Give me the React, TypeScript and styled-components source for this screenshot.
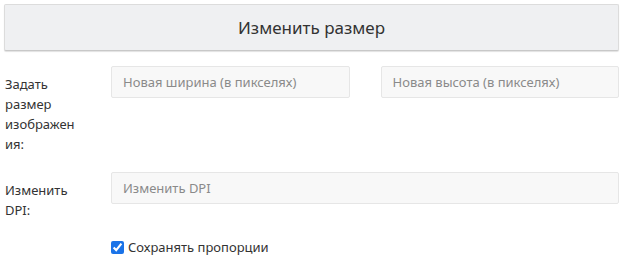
import React, { useState } from 'react';
import styled, { createGlobalStyle } from 'styled-components';

const GlobalStyle = createGlobalStyle`
  body {
    margin: 0;
    font-family: "Noto Sans", "Open Sans", sans-serif;
    color: #333;
    background: #fff;
  }
`;

const Page = styled.div`
  width: 623px;
  padding: 4px 4px 0 4px;
  box-sizing: border-box;
`;

const ResizeButton = styled.button`
  display: block;
  width: 100%;
  height: 47px;
  background: #eff0f2;
  border: 1px solid #dcdcdc;
  border-bottom-color: #c8c8c8;
  border-radius: 2px;
  box-shadow: 0 1px 1px rgba(0, 0, 0, 0.12);
  font-family: inherit;
  font-size: 17px;
  color: #333;
  cursor: pointer;
`;

const FormRow = styled.div<{ $top: number }>`
  display: grid;
  grid-template-columns: 72px 1fr;
  column-gap: 35px;
  margin-top: ${(p) => p.$top}px;
`;

const Label = styled.label`
  padding-left: 1px;
  padding-top: 8px;
  font-size: 13px;
  line-height: 20px;
  color: #333;
  overflow-wrap: anywhere;
`;

const Inputs = styled.div`
  display: flex;
  gap: 31px;
`;

const TextInput = styled.input`
  flex: 1;
  min-width: 0;
  height: 32px;
  box-sizing: border-box;
  padding: 0 11px;
  background: #f8f8f8;
  border: 1px solid #e6e6e6;
  border-radius: 2px;
  font-family: inherit;
  font-size: 13px;
  color: #333;
  outline: none;

  &::placeholder {
    color: #8a8a8a;
  }
`;

const CheckRow = styled.label`
  display: flex;
  align-items: center;
  gap: 4px;
  height: 18px;
  margin: 18px 0 0 107px;
  font-size: 13px;
  color: #333;
`;

const Check = styled.input`
  width: 13px;
  height: 13px;
  margin: 0;
  accent-color: #1a73e8;
`;

export default function App() {
  const [keep, setKeep] = useState(true);
  return (
    <Page>
      <GlobalStyle />
      <ResizeButton>Изменить размер</ResizeButton>
      <FormRow $top={15}>
        <Label>Задать размер изображения:</Label>
        <Inputs>
          <TextInput placeholder="Новая ширина (в пикселях)" />
          <TextInput placeholder="Новая высота (в пикселях)" />
        </Inputs>
      </FormRow>
      <FormRow $top={18}>
        <Label>Изменить DPI:</Label>
        <Inputs>
          <TextInput placeholder="Изменить DPI" />
        </Inputs>
      </FormRow>
      <CheckRow>
        <Check type="checkbox" checked={keep} onChange={(e) => setKeep(e.target.checked)} />
        Сохранять пропорции
      </CheckRow>
    </Page>
  );
}
